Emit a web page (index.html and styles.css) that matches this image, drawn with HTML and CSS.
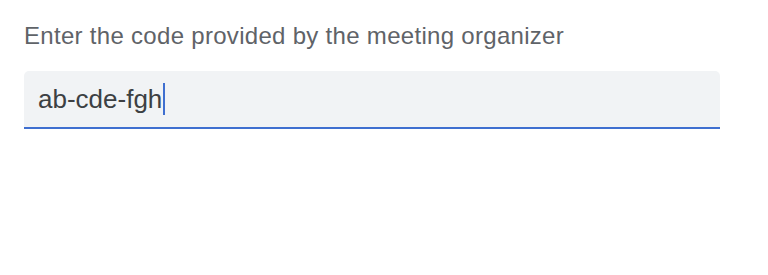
FILE: index.html
```html
<!DOCTYPE html>
<html lang="en">
<head>
    <meta charset="UTF-8">
    <meta name="viewport" content="width=device-width, initial-scale=1.0">
    <title>Join with a code</title>
    <link rel="stylesheet" href="styles.css">
</head>
<body>

    <!-- Join meeting form -->
    <div class="join-box">
        <p class="join-label">Enter the code provided by the meeting organizer</p>
        <div class="code-field">
            <span class="code-value">ab-cde-fgh</span><span class="caret"></span>
        </div>
    </div>

</body>
</html>
```
FILE: styles.css
```css
/* Basic reset */
* {
    margin: 0;
    padding: 0;
    box-sizing: border-box;
}

body {
    font-family: "Liberation Sans", Arial, sans-serif;
    background-color: #fff;
}

.join-box {
    padding: 21px 48px 0 24px;
}

.join-label {
    font-size: 24px;
    letter-spacing: 0.3px;
    line-height: 30px;
    color: #5f6368;
}

.code-field {
    margin-top: 20px;
    width: 696px;
    height: 58px;
    background-color: #f1f3f5;
    border-radius: 5px 5px 0 0;
    border-bottom: 2px solid #3f6fd0;
    display: flex;
    align-items: center;
    padding-left: 14px;
}

.code-value {
    font-size: 26px;
    color: #3c4043;
}

.caret {
    display: inline-block;
    width: 2px;
    height: 32px;
    margin-left: 1px;
    background-color: #3f6fd0;
}
```
